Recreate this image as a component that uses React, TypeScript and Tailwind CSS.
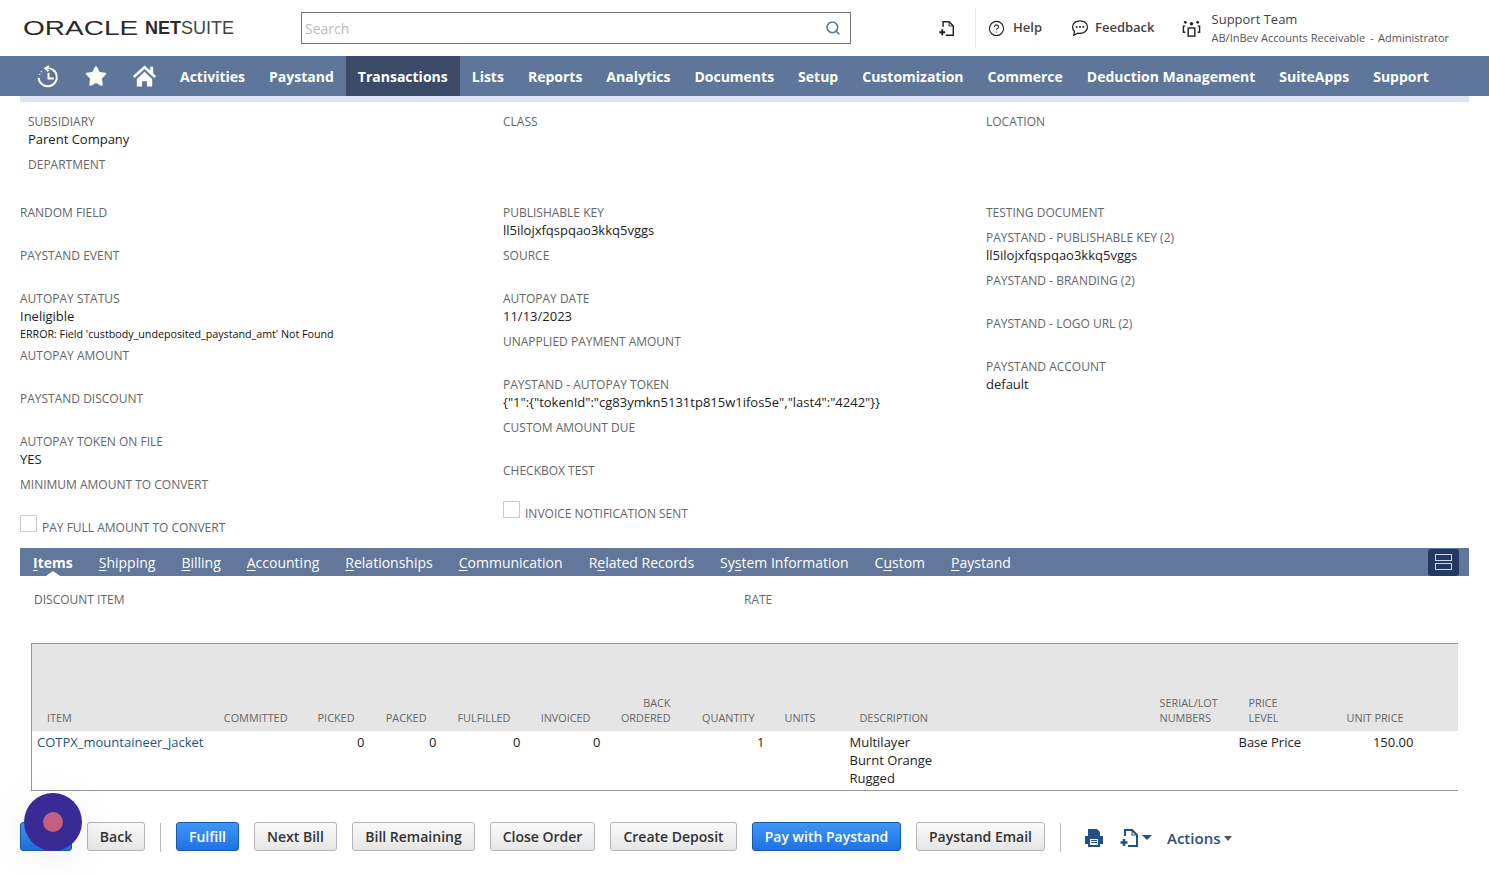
import type { ReactNode } from 'react'
import { CircleHelp, Search } from 'lucide-react'
import { FaStar } from 'react-icons/fa'

const navItems = [
  'Activities',
  'Paystand',
  'Transactions',
  'Lists',
  'Reports',
  'Analytics',
  'Documents',
  'Setup',
  'Customization',
  'Commerce',
  'Deduction Management',
  'SuiteApps',
  'Support',
]

// pre / underlined letter / post
const tabs: [string, string, string][] = [
  ['', 'I', 'tems'],
  ['', 'S', 'hipping'],
  ['', 'B', 'illing'],
  ['', 'A', 'ccounting'],
  ['', 'R', 'elationships'],
  ['', 'C', 'ommunication'],
  ['R', 'e', 'lated Records'],
  ['Sy', 's', 'tem Information'],
  ['C', 'u', 'stom'],
  ['', 'P', 'aystand'],
]

const buttons = [
  { label: 'Fulfill', primary: true, width: 'w-[63px]' },
  { label: 'Next Bill', width: 'w-[83px]' },
  { label: 'Bill Remaining', width: 'w-[123px]' },
  { label: 'Close Order', width: 'w-[105px]' },
  { label: 'Create Deposit', width: 'w-[127px]' },
  { label: 'Pay with Paystand', primary: true, width: 'w-[149px]' },
  { label: 'Paystand Email', width: 'w-[129px]' },
]

function Field({ label, value, className = 'min-h-[43px]' }: { label: string; value?: string; className?: string }) {
  return (
    <div className={className}>
      <div className="h-[18px] text-[12px] leading-[20px] text-[#666]">{label}</div>
      {value && <div className="h-[18px] text-[13px] leading-[18px] text-[#222]">{value}</div>}
    </div>
  )
}

function CheckField({ label, className }: { label: string; className: string }) {
  return (
    <div className={`flex items-start ${className}`}>
      <span className="-mt-[3px] mr-[5px] h-[17px] w-[17px] border border-[#ccc] bg-white" />
      <span className="text-[12px] leading-[20px] text-[#666]">{label}</span>
    </div>
  )
}

function Btn({ label, primary, width }: { label: string; primary?: boolean; width: string }) {
  return (
    <button
      type="button"
      className={
        primary
          ? `h-[29px] rounded-[3px] border border-[#1559ad] bg-gradient-to-b from-[#3d96f9] to-[#1f72e0] text-[14px] font-semibold text-white ${width}`
          : `h-[29px] rounded-[3px] border border-[#b5b5b5] bg-gradient-to-b from-[#fafafa] to-[#e6e6e6] text-[14px] font-semibold text-[#333] ${width}`
      }
    >
      {label}
    </button>
  )
}

function Th({ children, right, className = '' }: { children?: ReactNode; right?: boolean; className?: string }) {
  return (
    <th
      className={`align-bottom pb-[6px] text-[10.85px] font-normal leading-[15px] text-[#666] ${
        right ? 'pr-[15px] text-right' : 'pl-[15px] text-left'
      } ${className}`}
    >
      {children}
    </th>
  )
}

function NewRecordIcon({ className, weight = 1.7 }: { className: string; weight?: number }) {
  return (
    <svg viewBox="0 0 20 20" className={className} fill="none" stroke="currentColor" strokeWidth={weight}>
      <path d="M6 8V2h7l5 5v11h-9" />
      <path d="M13 2v5h5" strokeWidth="1.1" />
      <path d="M5 11v7M1.500 14.500h7" strokeWidth={weight + 0.6} />
    </svg>
  )
}

function RecentIcon() {
  return (
    <svg viewBox="0 0 24 24" className="h-[23px] w-[23px]" fill="none" stroke="currentColor" strokeWidth="2">
      <path d="M9 3.500a9.500 9.500 0 1 1-7.300 10" />
      <path d="M12.500 1 8.500 3.500l3.500 3" strokeWidth="1.800" />
      <path d="M12 8v6h5.500" />
      <path d="M2.500 10.500l.3-1M4.200 7.200l.7-.8" strokeWidth="1.600" />
    </svg>
  )
}

function HomeIcon() {
  return (
    <svg viewBox="0 0 26 24" className="h-6 w-[25px]" fill="currentColor">
      <path d="M13 1 1 12l1.800 2L13 4.700 23.200 14l1.800-2-3-2.800V2.500h-3v3.900z" />
      <path d="M5 15 13 7.500 21 15v8h-5.500v-5.500h-5V23H5z" />
    </svg>
  )
}

function FeedbackIcon() {
  return (
    <svg viewBox="0 0 20 20" className="h-[18px] w-[18px] text-[#222]" fill="none" stroke="currentColor" strokeWidth="1.400">
      <path d="M10 2c-4.700 0-8.300 3-8.300 7 0 1.900.8 3.600 2.200 4.800L3 18l4.300-2.300c.9.200 1.800.3 2.700.3 4.700 0 8.300-3 8.300-7s-3.600-7-8.300-7z" />
      <circle cx="6.300" cy="9" r="1.100" fill="currentColor" stroke="none" />
      <circle cx="10" cy="9" r="1.100" fill="currentColor" stroke="none" />
      <circle cx="13.700" cy="9" r="1.100" fill="currentColor" stroke="none" />
    </svg>
  )
}

export default function App() {
  return (
    <div className="relative h-[875px] overflow-hidden bg-white font-['Open_Sans','Liberation_Sans',sans-serif]">
      {/* top bar */}
      <header className="flex h-14 items-center">
        <div className="ml-[23px] flex w-[278px] items-center whitespace-nowrap text-[#2b2b2b]">
          <span className="inline-block w-[122px] origin-left scale-x-[1.4] font-['Liberation_Sans',sans-serif] text-[20px] leading-none">
            ORACLE
          </span>
          <span className="font-['Liberation_Sans',sans-serif] text-[18px] leading-none">
            <span className="font-bold">NET</span>
            <span className="font-normal text-[#444]">SUITE</span>
          </span>
        </div>
        <div className="flex h-8 w-[550px] items-center justify-between border border-[#777] pl-[3px] pr-[9px]">
          <span className="text-[14px] text-[#bbb]">Search</span>
          <Search className="h-4 w-4 text-[#5d7a9c]" strokeWidth={2.4} />
        </div>
        <NewRecordIcon className="ml-[87px] h-[17px] w-[17px] text-[#222]" />
        <div className="ml-[20px] h-10 w-px bg-[#e8e8e8]" />
        <div className="ml-[12px] flex items-center text-[13px] font-semibold text-[#444]">
          <CircleHelp className="h-[17px] w-[17px] text-[#222]" strokeWidth={1.6} />
          <span className="ml-[8px]">Help</span>
        </div>
        <div className="ml-[29px] flex items-center text-[13px] font-semibold text-[#444]">
          <FeedbackIcon />
          <span className="ml-[6px]">Feedback</span>
        </div>
        <div className="ml-[27px] flex items-center">
          <svg viewBox="0 0 20 20" className="h-[19px] w-[19px] text-[#222]" fill="currentColor">
            <circle cx="10" cy="5" r="1.800" />
            <circle cx="3.500" cy="3.500" r="1.500" />
            <circle cx="16.500" cy="3.500" r="1.500" />
            <g fill="none" stroke="currentColor" strokeWidth="1.500">
              <rect x="6.500" y="9.500" width="7" height="8.500" />
              <path d="M3.500 14H1.500V7.500h2M16.500 14h2V7.500h-2" />
            </g>
          </svg>
          <div className="ml-[11px]">
            <div className="text-[13px] leading-[19px] text-[#444]">Support Team</div>
            <div className="text-[11px] leading-[17px] text-[#555]">
              AB/InBev Accounts Receivable {'\u2009'}-{'\u2009'} Administrator
            </div>
          </div>
        </div>
      </header>

      {/* main nav */}
      <nav className="flex h-10 items-stretch bg-[#5d7699] pl-[37px] text-white">
        <div className="flex items-center">
          <RecentIcon />
          <FaStar className="ml-[25px] h-[22px] w-[22px]" />
          <div className="ml-[25px]">
            <HomeIcon />
          </div>
        </div>
        <div className="ml-[11px] flex items-stretch">
          {navItems.map((item) => (
            <div
              key={item}
              className={`flex items-center px-3 text-[14px] font-bold ${item === 'Transactions' ? 'bg-[#3b4b67]' : ''}`}
            >
              {item}
            </div>
          ))}
        </div>
      </nav>
      <div className="mx-5 h-[6px] bg-[#dfe5f0]" />

      {/* fields */}
      <section className="grid grid-cols-[483px_483px_1fr] px-5 pt-[10px]">
        <div>
          <div className="mb-[5px] pl-2">
            <Field label="SUBSIDIARY" value="Parent Company" />
            <Field label="DEPARTMENT" />
          </div>
          <Field label="RANDOM FIELD" />
          <Field label="PAYSTAND EVENT" />
          <Field label="AUTOPAY STATUS" value="Ineligible" className="h-[57px]" />
          <div className="-mt-[21px] mb-[3px] h-[18px] text-[10.7px] leading-[18px] text-[#111]">
            ERROR: Field 'custbody_undeposited_paystand_amt' Not Found
          </div>
          <Field label="AUTOPAY AMOUNT" />
          <Field label="PAYSTAND DISCOUNT" />
          <Field label="AUTOPAY TOKEN ON FILE" value="YES" />
          <Field label="MINIMUM AMOUNT TO CONVERT" />
          <CheckField label="PAY FULL AMOUNT TO CONVERT" className="h-[30px]" />
        </div>
        <div>
          <div className="mb-[5px] h-[86px]">
            <Field label="CLASS" />
          </div>
          <Field label="PUBLISHABLE KEY" value="ll5ilojxfqspqao3kkq5vggs" />
          <Field label="SOURCE" />
          <Field label="AUTOPAY DATE" value="11/13/2023" />
          <Field label="UNAPPLIED PAYMENT AMOUNT" />
          <Field label="PAYSTAND - AUTOPAY TOKEN" value={'{"1":{"tokenId":"cg83ymkn5131tp815w1ifos5e","last4":"4242"}}'} />
          <Field label="CUSTOM AMOUNT DUE" />
          <Field label="CHECKBOX TEST" />
          <CheckField label="INVOICE NOTIFICATION SENT" className="h-[30px]" />
        </div>
        <div>
          <div className="mb-[5px] h-[86px]">
            <Field label="LOCATION" />
          </div>
          <Field label="TESTING DOCUMENT" className="h-[25px]" />
          <Field label="PAYSTAND - PUBLISHABLE KEY (2)" value="ll5ilojxfqspqao3kkq5vggs" />
          <Field label="PAYSTAND - BRANDING (2)" />
          <Field label="PAYSTAND - LOGO URL (2)" />
          <Field label="PAYSTAND ACCOUNT" value="default" />
        </div>
      </section>

      {/* subtabs */}
      <div className="mx-5 flex h-7 items-center justify-between bg-[#627799] pl-[13px] pr-[10px] text-white">
        <div className="flex h-7 gap-[26px] text-[14px]">
          {tabs.map(([pre, key, post], i) => (
            <span key={key + post} className={`relative h-7 leading-[30px] ${i === 0 ? 'font-bold' : ''}`}>
              {pre}
              <span className="underline underline-offset-2">{key}</span>
              {post}
              {i === 0 && (
                <span className="absolute bottom-0 left-1/2 -ml-[7px] h-0 w-0 border-x-[7px] border-b-[5px] border-x-transparent border-b-white" />
              )}
            </span>
          ))}
        </div>
        <div className="flex h-[27px] w-[31px] flex-col items-center justify-center gap-[2px] rounded-[3px] bg-[#24395f]">
          <span className="h-[7px] w-[17px] border border-[#cfd8e6]" />
          <span className="h-[7px] w-[17px] border border-[#cfd8e6]" />
        </div>
      </div>

      <div className="flex h-[67px] pl-[34px] pt-[14px]">
        <div className="w-[710px]">
          <Field label="DISCOUNT ITEM" />
        </div>
        <Field label="RATE" />
      </div>

      {/* items table */}
      <table className="ml-[31px] w-[1427px] table-fixed border-collapse border-y border-l border-[#999]">
        <colgroup>
          <col className="w-[182px]" />
          <col className="w-[89px]" />
          <col className="w-[67px]" />
          <col className="w-[72px]" />
          <col className="w-[84px]" />
          <col className="w-[80px]" />
          <col className="w-[80px]" />
          <col className="w-[84px]" />
          <col className="w-[75px]" />
          <col className="w-[300px]" />
          <col className="w-[89px]" />
          <col className="w-[90px]" />
          <col className="w-[95px]" />
          <col />
        </colgroup>
        <thead>
          <tr className="h-[87px] bg-[#e5e5e5]">
            <Th>ITEM</Th>
            <Th right>COMMITTED</Th>
            <Th right>PICKED</Th>
            <Th right>PACKED</Th>
            <Th right>FULFILLED</Th>
            <Th right>INVOICED</Th>
            <Th right>
              BACK
              <br />
              ORDERED
            </Th>
            <Th right>QUANTITY</Th>
            <Th>UNITS</Th>
            <Th>DESCRIPTION</Th>
            <Th>
              SERIAL/LOT
              <br />
              NUMBERS
            </Th>
            <Th>
              PRICE
              <br />
              LEVEL
            </Th>
            <Th right>UNIT PRICE</Th>
            <Th />
          </tr>
        </thead>
        <tbody className="text-[13px] leading-[18px] text-[#222]">
          <tr className="h-[60px] align-top">
            <td className="pl-[5px] pt-[2px] whitespace-nowrap text-[#255085]">COTPX_mountaineer_jacket</td>
            <td />
            <td className="pr-[5px] pt-[2px] text-right">0</td>
            <td className="pr-[5px] pt-[2px] text-right">0</td>
            <td className="pr-[5px] pt-[2px] text-right">0</td>
            <td className="pr-[5px] pt-[2px] text-right">0</td>
            <td />
            <td className="pr-[5px] pt-[2px] text-right">1</td>
            <td />
            <td className="pl-[5px] pt-[2px]">
              Multilayer
              <br />
              Burnt Orange
              <br />
              Rugged
            </td>
            <td />
            <td className="pl-[5px] pt-[2px]">Base Price</td>
            <td className="pr-[5px] pt-[2px] text-right">150.00</td>
            <td />
          </tr>
        </tbody>
      </table>

      {/* action buttons */}
      <div className="ml-5 mt-[29px] flex items-center">
        <Btn label="" primary width="w-[52px]" />
        <div className="ml-[15px]">
          <Btn label="Back" width="w-[58px]" />
        </div>
        <div className="ml-[15px] mr-[15px] mt-[3px] h-[29px] w-px bg-[#bbb]" />
        <div className="flex gap-[15px]">
          {buttons.map((b) => (
            <Btn key={b.label} {...b} />
          ))}
        </div>
        <div className="ml-[15px] mt-[3px] h-[29px] w-px bg-[#bbb]" />
        <div className="ml-[23px] mt-[3px] flex items-center text-[#255085]">
          <svg viewBox="0 0 20 20" className="h-5 w-5" fill="currentColor">
            <path d="M4 1h9l3 3v4H4z" />
            <path d="M1 8h18v8h-3v3H4v-3H1z" />
            <path d="M6 11h8v6H6z" fill="#fff" />
            <path d="M7 12.500h6M7 14.500h6" stroke="currentColor" />
          </svg>
          <NewRecordIcon className="ml-[15px] h-5 w-5" weight={2} />
          <span className="ml-[3px] h-0 w-0 border-x-[5px] border-t-[5px] border-x-transparent border-t-[#255085]" />
          <span className="ml-[15px] mt-[2px] text-[15px] font-semibold">Actions</span>
          <span className="ml-[4px] mt-[2px] h-0 w-0 border-x-[4px] border-t-[5px] border-x-transparent border-t-[#555]" />
        </div>
      </div>

      {/* floating widget */}
      <div className="absolute left-[24px] top-[793px] flex h-[58px] w-[58px] items-center justify-center rounded-full bg-[#3a2a96] shadow-[0_8px_40px_rgba(0,0,0,0.08)]">
        <span className="h-5 w-5 rounded-full bg-[#c2607f]" />
      </div>
    </div>
  )
}
